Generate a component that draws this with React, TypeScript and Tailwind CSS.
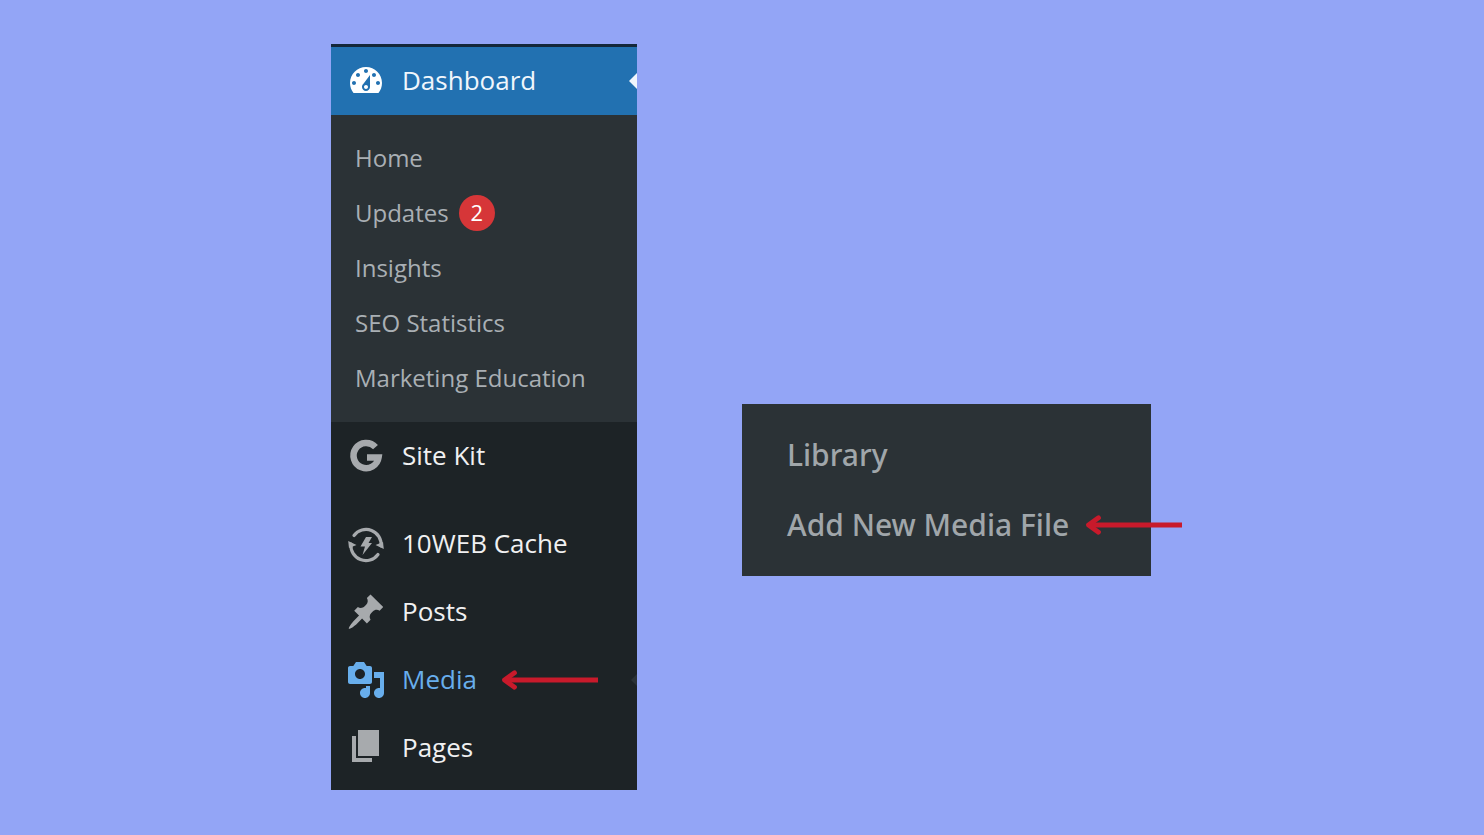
import React from 'react';

type IconProps = { className?: string };

const DASHBOARD_PATH =
  'M3.76 16h12.48c1.1-1.37 1.76-3.11 1.76-5 0-4.42-3.58-8-8-8s-8 3.58-8 8c0 1.89.66 3.63 1.76 5zM10 4c.55 0 1 .45 1 1s-.45 1-1 1-1-.45-1-1 .45-1 1-1zM6 6c.55 0 1 .45 1 1s-.45 1-1 1-1-.45-1-1 .45-1 1-1zm8 0c.55 0 1 .45 1 1s-.45 1-1 1-1-.45-1-1 .45-1 1-1zm-5.37 5.55L12 7v6c0 1.1-.9 2-2 2s-2-.9-2-2c0-.57.24-1.08.63-1.45zM4 10c.55 0 1 .45 1 1s-.45 1-1 1-1-.45-1-1 .45-1 1-1zm12 0c.55 0 1 .45 1 1s-.45 1-1 1-1-.45-1-1 .45-1 1-1zm-5 3c0-.55-.45-1-1-1s-1 .45-1 1 .45 1 1 1 1-.45 1-1z';
const PIN_PATH =
  'M10.44 3.02l1.82-1.82 6.36 6.35-1.83 1.82c-1.05-.68-2.48-.57-3.41.36l-.75.75c-.92.93-1.04 2.35-.35 3.41l-1.83 1.82-2.41-2.41-2.8 2.79c-.42.42-3.38 2.71-3.8 2.29s1.86-3.39 2.28-3.81l2.79-2.79L4.1 9.36l1.83-1.82c1.05.69 2.48.57 3.4-.36l.75-.75c.93-.92 1.05-2.35.36-3.41z';
const MEDIA_PATH =
  'M13 11V4c0-.55-.45-1-1-1h-1.67L9 1H5L3.67 3H2c-.55 0-1 .45-1 1v7c0 .55.45 1 1 1h10c.55 0 1-.45 1-1zM7 4.5c1.38 0 2.5 1.12 2.5 2.5S8.38 9.5 7 9.5 4.5 8.38 4.5 7 5.62 4.5 7 4.5zM14 6h5v10.5c0 1.38-1.12 2.5-2.5 2.5S14 17.88 14 16.5s1.12-2.5 2.5-2.5c.17 0 .34.02.5.05V9h-3V6zm-4 8.05V13h2v3.5c0 1.38-1.12 2.5-2.5 2.5S7 17.88 7 16.5 8.12 14 9.5 14c.17 0 .34.02.5.05z';
const PAGES_PATH = 'M6 14V1h10.5v13H6zm-1 1h8v2H3V4h2v11z';

function MenuIcon({ d, className = '' }: { d: string; className?: string }) {
  return (
    <svg viewBox="0 0 20 20" fill="currentColor" aria-hidden="true" className={`size-10 shrink-0 ${className}`}>
      <path d={d} />
    </svg>
  );
}

function SiteKitIcon({ className = '' }: IconProps) {
  return (
    <svg viewBox="0 0 40 40" fill="none" aria-hidden="true" className={`size-10 shrink-0 ${className}`}>
      <path d="M29.5 11.2A12.6 12.6 0 1 0 32.6 21.4H21" stroke="currentColor" strokeWidth="6.5" />
    </svg>
  );
}

function CacheIcon({ className = '' }: IconProps) {
  return (
    <svg viewBox="0 0 40 40" fill="none" aria-hidden="true" className={`size-10 shrink-0 ${className}`}>
      <g stroke="currentColor" strokeWidth="3.2" strokeLinecap="round">
        <path d="M8 11.5A15 15 0 0 1 35 22" />
        <path d="M32 30.5A15 15 0 0 1 5 20" />
      </g>
      <path d="M29.5 21l7.5-3 .8 7z" fill="currentColor" />
      <path d="M10.5 21L3 24l-.8-7z" fill="currentColor" />
      <path d="M20 13h6l-3.5 6H26l-9.500 12 2.500-8.500h-4.500z" fill="currentColor" />
    </svg>
  );
}

function RedArrow() {
  return (
    <svg viewBox="0 0 97 20" fill="none" aria-hidden="true" className="h-5 w-[97px] shrink-0 text-[#c81a2b]">
      <path d="M97 10H4" stroke="currentColor" strokeWidth="4.8" />
      <path d="M13.5 2.8L3.5 10l10 7.2" stroke="currentColor" strokeWidth="4.8" strokeLinejoin="round" strokeLinecap="round" />
    </svg>
  );
}

interface MenuItemProps {
  label: string;
  icon: React.ReactNode;
  active?: boolean;
  children?: React.ReactNode;
}

function MenuItem({ label, icon, active = false, children }: MenuItemProps) {
  return (
    <li className="flex h-17 items-center">
      <a
        href="#"
        className={`flex items-center gap-4 text-[26px] whitespace-nowrap ${active ? 'text-[#68aeec]' : 'text-[#f0f0f1]'}`}
      >
        {icon}
        {label}
      </a>
      {children}
    </li>
  );
}

const SUBMENU = [
  { label: 'Home' },
  { label: 'Updates', count: 2 },
  { label: 'Insights' },
  { label: 'SEO Statistics' },
  { label: 'Marketing Education' }
];

export default function App() {
  return (
    <main className="flex min-h-screen items-center justify-center gap-[105px] bg-[#93a5f6] pr-0.5 pb-0.5 font-['Segoe_UI','Open_Sans',sans-serif]">
      <nav aria-label="Admin menu" className="w-[306px] shrink-0 border-t-3 border-[#14283a] bg-[#1d2326] pb-2">
        {/* Current section */}
        <a
          href="#"
          className="flex h-17 items-center gap-4 overflow-hidden bg-[#2271b1] pl-[15px] text-[26px] text-[#f0f6fc]"
        >
          <MenuIcon d={DASHBOARD_PATH} className="text-white" />
          <span className="flex-1">Dashboard</span>
          <svg viewBox="0 0 8 16" aria-hidden="true" className="h-4 w-2">
            <path d="M8 0v16L0 8z" fill="#f0f6fc" />
          </svg>
        </a>
        <ul className="bg-[#2b3236] py-4 pl-6 text-2xl text-[#a9afb4]">
          {SUBMENU.map(({ label, count }) => (
            <li key={label} className="flex h-[55px] items-center">
              <a href="#" className="flex items-center gap-2.5 whitespace-nowrap">
                {label}
                {count && (
                  <span className="flex size-9 items-center justify-center rounded-full bg-[#d63638] text-[22px] text-white">
                    {count}
                  </span>
                )}
              </a>
            </li>
          ))}
        </ul>

        <ul className="pl-[15px]">
          <MenuItem label="Site Kit" icon={<SiteKitIcon className="text-[#a7aaad]" />} />
        </ul>
        <ul className="mt-5 pl-[15px]">
          <MenuItem label="10WEB Cache" icon={<CacheIcon className="text-[#a7aaad]" />} />
          <MenuItem label="Posts" icon={<MenuIcon d={PIN_PATH} className="text-[#a7aaad]" />} />
          <MenuItem label="Media" icon={<MenuIcon d={MEDIA_PATH} />} active>
            <span className="ml-6">
              <RedArrow />
            </span>
            <svg viewBox="0 0 6 12" aria-hidden="true" className="ml-auto h-3 w-1.5">
              <path d="M6 0v12L0 6z" fill="#2b3236" />
            </svg>
          </MenuItem>
          <MenuItem label="Pages" icon={<MenuIcon d={PAGES_PATH} className="text-[#a7aaad]" />} />
        </ul>
      </nav>

      {/* Media flyout */}
      <ul className="mt-[146px] w-[409px] shrink-0 bg-[#2b3236] py-4 pl-[45px] font-['Segoe_UI','Noto_Sans',sans-serif] text-[30px] font-medium text-[#a0a6aa]">
        <li className="flex h-[70px] items-center">
          <a href="#">Library</a>
        </li>
        <li className="flex h-[70px] items-center gap-4">
          <a href="#" className="whitespace-nowrap">Add New Media File</a>
          <RedArrow />
        </li>
      </ul>
    </main>
  );
}
